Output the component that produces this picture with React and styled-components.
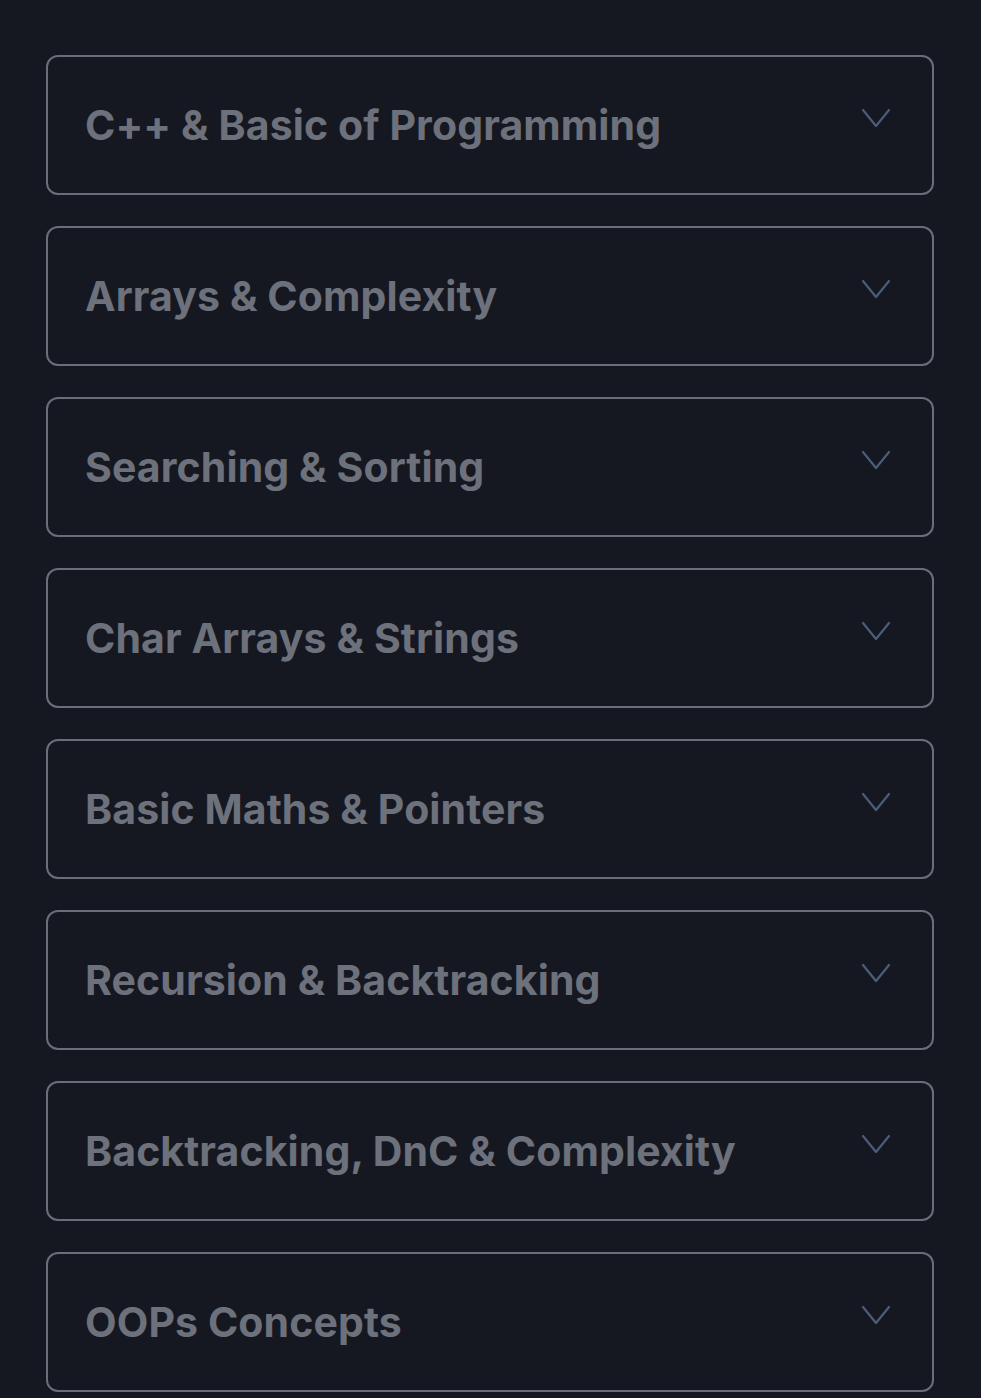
import styled, { createGlobalStyle } from 'styled-components'

const topics = [
  'C++ & Basic of Programming',
  'Arrays & Complexity',
  'Searching & Sorting',
  'Char Arrays & Strings',
  'Basic Maths & Pointers',
  'Recursion & Backtracking',
  'Backtracking, DnC & Complexity',
  'OOPs Concepts',
]

const GlobalStyle = createGlobalStyle`
  html, body {
    margin: 0;
    background: #161821;
  }
  body {
    font-family: Inter, "Noto Sans", sans-serif;
  }
`

const Chevron = () => (
  <svg width='30' height='22' viewBox='0 0 30 22' fill='none'>
    <polyline
      points='2,3 15,19 28,3'
      stroke='#4b5d78'
      strokeWidth='2.2'
      strokeLinecap='round'
      strokeLinejoin='round'
    />
  </svg>
)

const App = () => {
  return (
    <>
      <GlobalStyle />
      <List>
        {topics.map((t) => (
          <Item key={t}>
            <Title>{t}</Title>
            <Icon>
              <Chevron />
            </Icon>
          </Item>
        ))}
      </List>
    </>
  )
}

const List = styled.div`
  display: flex;
  flex-direction: column;
  gap: 31px;
  padding: 55px 47px 40px 46px;
`

const Item = styled.div`
  box-sizing: border-box;
  height: 140px;
  border: 2.5px solid #6a6e78;
  border-radius: 12px;
  display: flex;
  align-items: center;
  justify-content: space-between;
  padding: 0 41px 0 37px;
`

const Title = styled.h3`
  margin: 0;
  font-size: 41px;
  font-weight: 650;
  color: #6d717c;
  letter-spacing: 0.1px;
`

const Icon = styled.span`
  display: flex;
  align-self: flex-start;
  margin-top: 50px;
`

export default App
